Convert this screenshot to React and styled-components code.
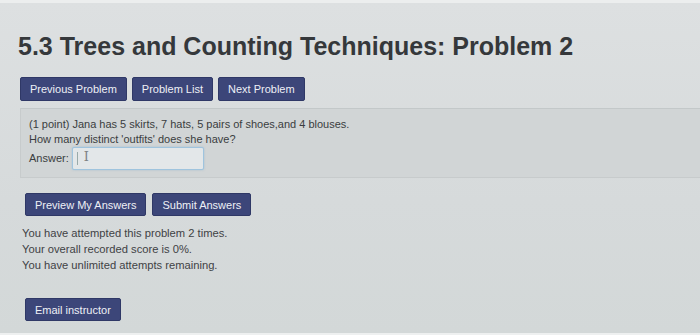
import React from 'react';
import styled, { createGlobalStyle } from 'styled-components';

const Global = createGlobalStyle`
  html, body {
    margin: 0;
    padding: 0;
    background: #d9dddd;
  }
  body {
    font-family: "Liberation Sans", Arial, sans-serif;
    color: #333;
  }
`;

const Page = styled.div`
  width: 700px;
  height: 335px;
  box-sizing: border-box;
  overflow: hidden;
  border-top: 3px solid #eceeee;
  border-bottom: 2px solid #eef0f0;
  background: linear-gradient(180deg, #dde0e1 0%, #d6dadb 60%, #d3d8d8 100%);
  padding: 29px 0 0 18px;
`;

const Title = styled.h1`
  margin: 0 0 16px;
  font-size: 25px;
  line-height: 29px;
  font-weight: bold;
  color: #35383b;
`;

const Row = styled.div`
  display: flex;
  gap: ${p => p.gap || 6}px;
  padding-left: ${p => p.indent || 0}px;
`;

const Button = styled.button`
  font-family: inherit;
  font-size: 11px;
  color: #eef0f6;
  background: #3c4679;
  border: 1px solid #2f3866;
  border-radius: 2px;
  height: ${p => p.h || 23}px;
  padding: 0 9px;
  cursor: pointer;
`;

const ProblemBox = styled.div`
  margin: 7px 0 0 2px;
  background: #d1d5d6;
  border-top: 1px solid #c3c8c9;
  border-bottom: 1px solid #c7cbcc;
  border-left: 1px solid #c7cbcc;
  padding: 8px 0 7px 8px;
  font-size: 11px;
  line-height: 15px;
  color: #3a3d40;
`;

const AnswerLine = styled.div`
  display: flex;
  align-items: center;
`;

const Input = styled.div`
  box-sizing: border-box;
  width: 132px;
  height: 23px;
  margin-left: 3px;
  border: 1px solid #9fc4de;
  border-radius: 2px;
  background: #e3e7e9;
  box-shadow: 0 0 2px rgba(120, 170, 210, 0.5);
  display: flex;
  align-items: center;
  padding-left: 4px;
  gap: 6px;
  color: #888;
`;

const Caret = styled.span`
  width: 1px;
  height: 13px;
  background: #9aa;
`;

const IBeam = styled.span`
  font-family: "DejaVu Serif", serif;
  font-size: 13px;
  color: #7d8285;
  margin-top: -4px;
`;

const Actions = styled.div`
  margin-top: 15px;
`;

const Info = styled.div`
  margin: 9px 0 0 4px;
  font-size: 11.2px;
  line-height: 16px;
  color: #3f4245;
`;

const Footer = styled.div`
  margin-top: 25px;
`;

export default function App() {
  return (
    <>
      <Global />
      <Page>
        <Title>5.3 Trees and Counting Techniques: Problem 2</Title>
        <Row indent={2} gap={5}>
          <Button h={24}>Previous Problem</Button>
          <Button h={24}>Problem List</Button>
          <Button h={24}>Next Problem</Button>
        </Row>
        <ProblemBox>
          <div>(1 point) Jana has 5 skirts, 7 hats, 5 pairs of shoes,and 4 blouses.</div>
          <div>How many distinct 'outfits' does she have?</div>
          <AnswerLine>
            Answer:
            <Input>
              <Caret />
              <IBeam>I</IBeam>
            </Input>
          </AnswerLine>
        </ProblemBox>
        <Actions>
          <Row indent={7} gap={6}>
            <Button>Preview My Answers</Button>
            <Button>Submit Answers</Button>
          </Row>
        </Actions>
        <Info>
          <div>You have attempted this problem 2 times.</div>
          <div>Your overall recorded score is 0%.</div>
          <div>You have unlimited attempts remaining.</div>
        </Info>
        <Footer>
          <Row indent={7}>
            <Button>Email instructor</Button>
          </Row>
        </Footer>
      </Page>
    </>
  );
}
